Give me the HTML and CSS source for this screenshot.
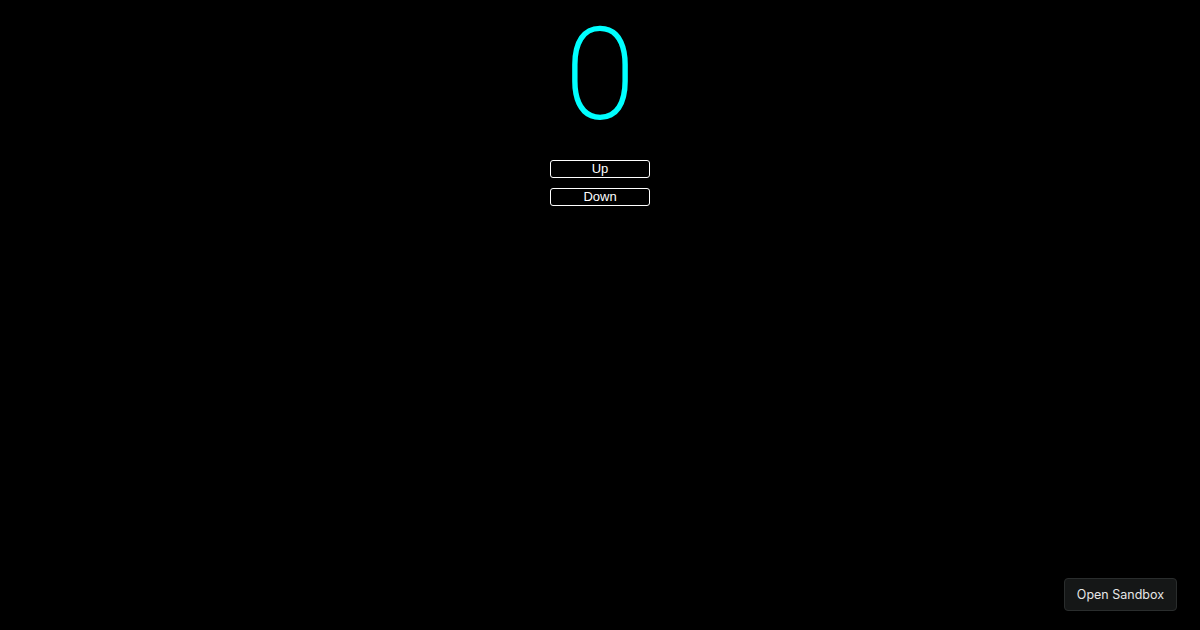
FILE: index.html
```html
<!DOCTYPE html>
<html>
<head>
<meta charset="utf-8">
<link rel="stylesheet" href="styles.css">
</head>
<body>
<main class="app">
  <div class="count">0</div>
  <div class="controls">
    <button class="btn">Up</button>
    <button class="btn">Down</button>
  </div>
</main>
<a class="sandbox">Open Sandbox</a>
</body>
</html>
```
FILE: styles.css
```css
html, body {
  margin: 0;
  padding: 0;
  background: #000;
  height: 100%;
}
body {
  font-family: Inter, "Liberation Sans", sans-serif;
  color: #fff;
}
.app {
  display: flex;
  flex-direction: column;
  align-items: center;
}
.count {
  color: #00ffff;
  font-family: Roboto, sans-serif;
  font-size: 126px;
  font-weight: 100;
  -webkit-text-stroke: 2px #00ffff;
  line-height: 150px;
}
.controls {
  display: flex;
  flex-direction: column;
  gap: 10px;
  margin-top: 10px;
}
.btn {
  width: 100px;
  height: 18px;
  background: #000;
  color: #fff;
  border: 1px solid #fff;
  border-radius: 3px;
  font-family: "Liberation Sans", Arial, sans-serif;
  font-size: 13px;
  padding: 0;
  line-height: 16px;
}
.sandbox {
  position: fixed;
  right: 23px;
  bottom: 19px;
  height: 33px;
  box-sizing: border-box;
  padding: 0 12px;
  display: flex;
  align-items: center;
  background: #151717;
  border: 1px solid #2a2d2d;
  border-radius: 4px;
  color: #e6e6e6;
  font-family: Inter, sans-serif;
  font-size: 12.5px;
}
```
